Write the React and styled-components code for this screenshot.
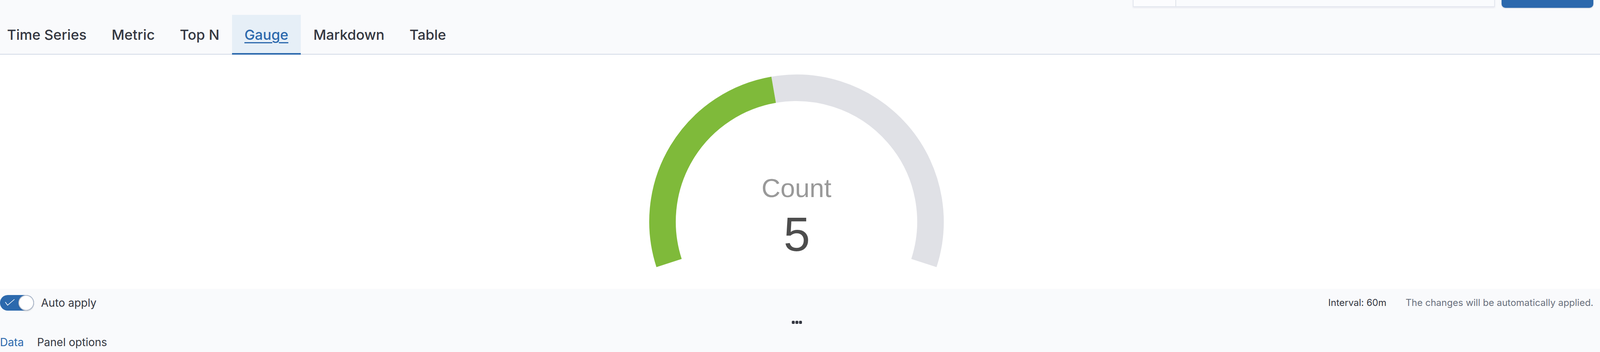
import React from 'react'
import styled, { createGlobalStyle } from 'styled-components'

const GlobalStyle = createGlobalStyle`
    html, body {
        margin: 0;
        padding: 0;
        background: #ffffff;
    }
    body {
        font-family: Inter, "Noto Sans", sans-serif;
        color: #343741;
    }
`

const Page = styled.div`
    width: 100%;
    height: 902px;
    display: flex;
    flex-direction: column;
    overflow: hidden;
    background: #ffffff;
`

const TopArea = styled.div`
    background: #f9fafc;
    display: flex;
    flex-direction: column;
`

// only the lower edge of the query bar is in view
const QueryBar = styled.div`
    height: 22px;
    overflow: hidden;
    display: flex;
    justify-content: flex-end;
    align-items: flex-end;
    gap: 17px;
    padding-right: 17px;
`

const QueryInput = styled.div`
    width: 927px;
    height: 62px;
    margin-bottom: 4px;
    box-sizing: border-box;
    display: flex;
    border: 2px solid #e3e6ee;
    background: #fafbfd;
    box-shadow: 0 3px 4px rgba(60, 70, 110, 0.08);
`

const Prepend = styled.div`
    width: 107px;
    border-right: 2px solid #e0e3ea;
    background: #fcfcfe;
`

const SubmitButton = styled.button`
    width: 235px;
    height: 64px;
    margin-bottom: 2px;
    border: none;
    border-radius: 10px;
    background: #2c69ad;
    box-shadow: 0 2px 3px rgba(40, 60, 100, 0.2);
`

const TabList = styled.div`
    margin-top: 16px;
    height: 100px;
    display: flex;
    border-bottom: 2px solid #d3dae6;
`

const Tabs = styled.div`
    display: flex;
    margin-left: -14px;
`

const Tab = styled.div`
    height: 102px;
    margin-bottom: -2px;
    box-sizing: border-box;
    padding: 0 32px;
    display: flex;
    align-items: center;
    font-size: 36px;
    font-weight: 500;
    color: ${p => (p.$active ? '#2c69ad' : '#343741')};
    text-decoration: ${p => (p.$active ? 'underline' : 'none')};
    text-underline-offset: 6px;
    text-decoration-thickness: 3px;
    background: ${p => (p.$active ? '#e6eff7' : 'transparent')};
    box-shadow: ${p => (p.$active ? 'inset 0 -4px 0 #2c69ad' : 'none')};
`

const ChartArea = styled.div`
    height: 600px;
    display: flex;
    justify-content: center;
    padding-right: 18px;
`

const BottomPanel = styled.div`
    flex: 1;
    background: #f9fafc;
    display: flex;
    flex-direction: column;
`

const ApplyRow = styled.div`
    margin-top: 16px;
    height: 40px;
    display: flex;
    align-items: center;
    justify-content: space-between;
    padding-right: 17px;
`

const Group = styled.div`
    display: flex;
    align-items: center;
    gap: ${p => p.$gap}px;
`

const SwitchTrack = styled.div`
    width: 87px;
    height: 40px;
    box-sizing: border-box;
    border-radius: 20px;
    background: #2c69ad;
    display: flex;
    align-items: center;
    justify-content: space-between;
    padding-left: 12px;
`

const SwitchKnob = styled.div`
    width: 40px;
    height: 40px;
    box-sizing: border-box;
    border-radius: 50%;
    background: #ffffff;
    border: 2px solid #b4bccb;
    box-shadow: 0 2px 3px rgba(0, 0, 0, 0.12);
`

const Label = styled.span`
    font-size: ${p => p.$size}px;
    line-height: 40px;
    color: ${p => p.$color || '#343741'};
    white-space: nowrap;
`

const DotsRow = styled.div`
    margin-top: 19px;
    height: 21px;
    display: flex;
    align-items: center;
    justify-content: center;
    padding-right: 16px;
`

const SubTabs = styled.div`
    margin-top: 20px;
    height: 41px;
    display: flex;
    align-items: center;
    gap: 34px;
`

const tabs = ['Time Series', 'Metric', 'Top N', 'Gauge', 'Markdown', 'Table']

// arc geometry: 216deg sweep, centre (400, 428), mid radius 343
const CX = 400
const CY = 428
const R = 343
const point = deg => {
    const a = (deg * Math.PI) / 180
    return `${(CX + R * Math.cos(a)).toFixed(2)} ${(CY + R * Math.sin(a)).toFixed(2)}`
}
const START = 162
const END = 378
const SPLIT = START + 216 * (5 / 11)

function Gauge() {
    return (
        <svg width="800" height="600" viewBox="0 0 800 600">
            <path
                d={`M ${point(SPLIT)} A ${R} ${R} 0 0 1 ${point(END)}`}
                fill="none"
                stroke="#e0e1e6"
                strokeWidth="68"
            />
            <path
                d={`M ${point(START)} A ${R} ${R} 0 0 1 ${point(SPLIT)}`}
                fill="none"
                stroke="#7fba3a"
                strokeWidth="68"
            />
            <text
                x="400"
                y="365"
                textAnchor="middle"
                fontFamily="'Liberation Sans', Arial, sans-serif"
                fontSize="67"
                fill="#999999"
            >
                Count
            </text>
            <text
                x="401"
                y="503"
                textAnchor="middle"
                fontFamily="'Liberation Sans', Arial, sans-serif"
                fontSize="122"
                fill="#4d4d4d"
            >
                5
            </text>
        </svg>
    )
}

export default function App() {
    return (
        <>
            <GlobalStyle />
            <Page>
                <TopArea>
                    <QueryBar>
                        <QueryInput>
                            <Prepend />
                        </QueryInput>
                        <SubmitButton />
                    </QueryBar>
                    <TabList>
                        <Tabs>
                            {tabs.map(t => (
                                <Tab key={t} $active={t === 'Gauge'}>
                                    {t}
                                </Tab>
                            ))}
                        </Tabs>
                    </TabList>
                </TopArea>

                <ChartArea>
                    <Gauge />
                </ChartArea>

                <BottomPanel>
                    <ApplyRow>
                        <Group $gap={18}>
                            <SwitchTrack>
                                <svg width="26" height="20" viewBox="0 0 26 20">
                                    <polyline
                                        points="1.5,8 7.5,16 25,1"
                                        fill="none"
                                        stroke="#ffffff"
                                        strokeWidth="1.6"
                                    />
                                </svg>
                                <SwitchKnob />
                            </SwitchTrack>
                            <Label $size={28}>Auto apply</Label>
                        </Group>
                        <Group $gap={49}>
                            <Label $size={24}>Interval: 60m</Label>
                            <Label $size={24} $color="#69707d">
                                The changes will be automatically applied.
                            </Label>
                        </Group>
                    </ApplyRow>
                    <DotsRow>
                        <svg width="26" height="8" viewBox="0 0 26 8">
                            <rect x="0" y="0" width="7.5" height="8" rx="2.5" fill="#343741" />
                            <rect x="9.3" y="0" width="7.5" height="8" rx="2.5" fill="#343741" />
                            <rect x="18.5" y="0" width="7.5" height="8" rx="2.5" fill="#343741" />
                        </svg>
                    </DotsRow>
                    <SubTabs>
                        <Label $size={28} $color="#2c69ad">Data</Label>
                        <Label $size={28}>Panel options</Label>
                    </SubTabs>
                </BottomPanel>
            </Page>
        </>
    )
}
